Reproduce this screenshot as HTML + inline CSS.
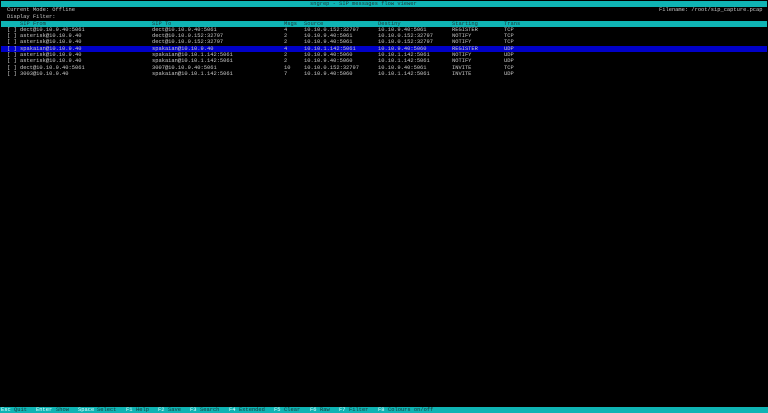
<!DOCTYPE html>
<html><head><meta charset="utf-8"><style>
html,body{margin:0;padding:0;background:#000;width:768px;height:413px;overflow:hidden}
body{position:relative;font-family:"Liberation Mono",monospace;font-size:5.4px;color:#c8c8c8}
.l{position:absolute;left:0;width:768px;height:6.33px;line-height:6.33px;white-space:pre}
.l span{position:absolute;top:0}
.bar{background:#0fb4b4;color:#1a3a3a}
.sel{background:#0000c8;color:#c8c8c8}
.k{color:#e0ffff}
</style></head><body>
<div class="l bar" style="top:1px;left:1px;width:766px"><span style="left:309px">sngrep - SIP messages flow viewer</span></div>
<div class="l" style="top:7.3px"><span style="left:7px">Current Mode: Offline</span><span style="left:659px">Filename: /root/sip_capture.pcap</span></div>
<div class="l" style="top:13.7px"><span style="left:7px">Display Filter:</span></div>
<div class="l bar" style="top:20.5px;left:1px;width:766px"><span style="left:19px">SIP From</span><span style="left:151px">SIP To</span><span style="left:283px">Msgs</span><span style="left:303px">Source</span><span style="left:377px">Destiny</span><span style="left:451px">Starting</span><span style="left:503px">Trans</span></div>

<div class="l" style="top:26.8px"><span style="left:7px">[ ]</span><span style="left:20px">dect@10.10.9.40:5061</span><span style="left:152px">dect@10.10.9.40:5061</span><span style="left:284px">4</span><span style="left:304px">10.10.0.152:32797</span><span style="left:378px">10.10.9.40:5061</span><span style="left:452px">REGISTER</span><span style="left:504px">TCP</span></div>
<div class="l" style="top:33.1px"><span style="left:7px">[ ]</span><span style="left:20px">asterisk@10.10.9.40</span><span style="left:152px">dect@10.10.0.152:32797</span><span style="left:284px">2</span><span style="left:304px">10.10.9.40:5061</span><span style="left:378px">10.10.0.152:32797</span><span style="left:452px">NOTIFY</span><span style="left:504px">TCP</span></div>
<div class="l" style="top:39.4px"><span style="left:7px">[ ]</span><span style="left:20px">asterisk@10.10.9.40</span><span style="left:152px">dect@10.10.0.152:32797</span><span style="left:284px">2</span><span style="left:304px">10.10.9.40:5061</span><span style="left:378px">10.10.0.152:32797</span><span style="left:452px">NOTIFY</span><span style="left:504px">TCP</span></div>
<div class="l sel" style="top:45.7px;left:1px;width:766px"><span style="left:6px">[ ]</span><span style="left:19px">spakaian@10.10.9.40</span><span style="left:151px">spakaian@10.10.9.40</span><span style="left:283px">4</span><span style="left:303px">10.10.1.142:5061</span><span style="left:377px">10.10.9.40:5060</span><span style="left:451px">REGISTER</span><span style="left:503px">UDP</span></div>
<div class="l" style="top:52px"><span style="left:7px">[ ]</span><span style="left:20px">asterisk@10.10.9.40</span><span style="left:152px">spakaian@10.10.1.142:5061</span><span style="left:284px">2</span><span style="left:304px">10.10.9.40:5060</span><span style="left:378px">10.10.1.142:5061</span><span style="left:452px">NOTIFY</span><span style="left:504px">UDP</span></div>
<div class="l" style="top:58.3px"><span style="left:7px">[ ]</span><span style="left:20px">asterisk@10.10.9.40</span><span style="left:152px">spakaian@10.10.1.142:5061</span><span style="left:284px">2</span><span style="left:304px">10.10.9.40:5060</span><span style="left:378px">10.10.1.142:5061</span><span style="left:452px">NOTIFY</span><span style="left:504px">UDP</span></div>
<div class="l" style="top:64.6px"><span style="left:7px">[ ]</span><span style="left:20px">dect@10.10.9.40:5061</span><span style="left:152px">3007@10.10.9.40:5061</span><span style="left:284px">10</span><span style="left:304px">10.10.0.152:32797</span><span style="left:378px">10.10.9.40:5061</span><span style="left:452px">INVITE</span><span style="left:504px">TCP</span></div>
<div class="l" style="top:70.9px"><span style="left:7px">[ ]</span><span style="left:20px">3003@10.10.9.40</span><span style="left:152px">spakaian@10.10.1.142:5061</span><span style="left:284px">7</span><span style="left:304px">10.10.9.40:5060</span><span style="left:378px">10.10.1.142:5061</span><span style="left:452px">INVITE</span><span style="left:504px">UDP</span></div>

<div class="l bar" style="top:406.5px;height:6.5px"><span style="left:1px" class="k">Esc</span><span style="left:14px">Quit</span><span style="left:36px" class="k">Enter</span><span style="left:56px">Show</span><span style="left:78px" class="k">Space</span><span style="left:97px">Select</span><span style="left:126px" class="k">F1</span><span style="left:136px">Help</span><span style="left:158px" class="k">F2</span><span style="left:168px">Save</span><span style="left:190px" class="k">F3</span><span style="left:200px">Search</span><span style="left:229px" class="k">F4</span><span style="left:239px">Extended</span><span style="left:274px" class="k">F5</span><span style="left:284px">Clear</span><span style="left:310px" class="k">F6</span><span style="left:320px">Raw</span><span style="left:339px" class="k">F7</span><span style="left:349px">Filter</span><span style="left:378px" class="k">F8</span><span style="left:388px">Colours on/off</span></div>
</body></html>
